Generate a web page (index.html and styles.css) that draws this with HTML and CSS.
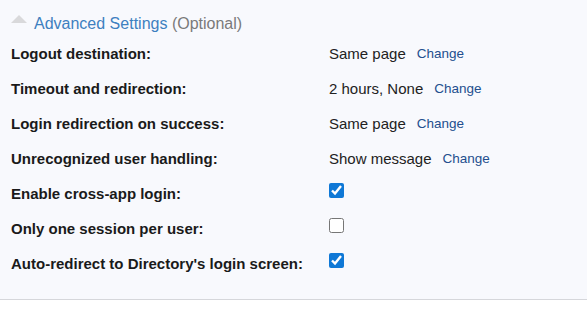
FILE: index.html
```html
<!DOCTYPE html>
<html lang="en">
<head>
  <meta charset="UTF-8" />
  <meta name="viewport" content="width=device-width, initial-scale=1.0">
  <title>Advanced Settings</title>
  <link rel="stylesheet" href="styles.css">
</head>
<body>

  <section class="panel">
    <div class="panel-head">
      <span class="caret"></span>
      <span class="panel-title">Advanced Settings <span class="optional">(Optional)</span></span>
    </div>

    <div class="settings">
      <div class="row">
        <div class="label">Logout destination:</div>
        <div class="value">Same page <a href="#" class="change">Change</a></div>
      </div>
      <div class="row">
        <div class="label">Timeout and redirection:</div>
        <div class="value">2 hours, None <a href="#" class="change">Change</a></div>
      </div>
      <div class="row">
        <div class="label">Login redirection on success:</div>
        <div class="value">Same page <a href="#" class="change">Change</a></div>
      </div>
      <div class="row">
        <div class="label">Unrecognized user handling:</div>
        <div class="value">Show message <a href="#" class="change">Change</a></div>
      </div>
      <div class="row">
        <div class="label">Enable cross-app login:</div>
        <div class="value"><input type="checkbox" class="check" checked></div>
      </div>
      <div class="row">
        <div class="label">Only one session per user:</div>
        <div class="value"><input type="checkbox" class="check"></div>
      </div>
      <div class="row">
        <div class="label">Auto-redirect to Directory's login screen:</div>
        <div class="value"><input type="checkbox" class="check" checked></div>
      </div>
    </div>
  </section>

</body>
</html>
```

FILE: styles.css
```css
html, body {
  margin: 0;
  padding: 0;
  background: #ffffff;
  font-family: 'Liberation Sans', Arial, sans-serif;
  color: #1c1c1c;
}

.panel {
  background: #f8f9fd;
  padding: 12px 0 18px 11px;
  border-bottom: 1px solid #d6d7db;
  box-shadow: 0 1px 1px rgba(0, 0, 0, 0.04);
}

.panel-head {
  display: flex;
  align-items: center;
  height: 24px;
}

.caret {
  width: 0;
  height: 0;
  border-left: 8px solid transparent;
  border-right: 8px solid transparent;
  border-bottom: 8px solid #d9d9db;
  margin-right: 7px;
  margin-bottom: 10px;
}

.panel-title {
  font-size: 16px;
  color: #3d80c0;
}

.optional {
  color: #7a7a7a;
}

.row {
  display: grid;
  grid-template-columns: 318px 1fr;
  align-items: center;
  height: 35px;
  font-size: 15px;
}

.label {
  font-weight: bold;
  color: #1a1a1a;
}

.value {
  display: flex;
  align-items: center;
  gap: 11px;
  color: #222222;
}

.change {
  font-size: 13.5px;
  color: #234f8e;
  text-decoration: none;
}

.check {
  width: 15px;
  height: 15px;
  margin: 0 0 7px 0;
  accent-color: #0f78d6;
}
```
